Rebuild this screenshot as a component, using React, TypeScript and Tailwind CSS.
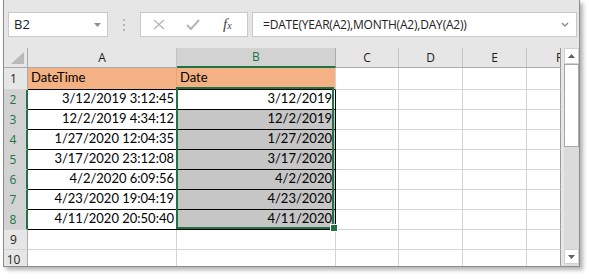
import React from 'react';

const cols = [
  { name: 'A', w: 'w-[149px]' },
  { name: 'B', w: 'w-[159px]' },
  { name: 'C', w: 'w-[63px]' },
  { name: 'D', w: 'w-[64px]' },
  { name: 'E', w: 'w-[64px]' },
];

const rows = [
  ['3/12/2019 3:12:45', '3/12/2019'],
  ['12/2/2019 4:34:12', '12/2/2019'],
  ['1/27/2020 12:04:35', '1/27/2020'],
  ['3/17/2020 23:12:08', '3/17/2020'],
  ['4/2/2020 6:09:56', '4/2/2020'],
  ['4/23/2020 19:04:19', '4/23/2020'],
  ['4/11/2020 20:50:40', '4/11/2020'],
];

const uiFont = "font-['Open_Sans','Noto_Sans',sans-serif]";
const cellFont = "font-['Lato','Open_Sans',sans-serif]";

function RowHeader({ n, selected }: { n: number; selected?: boolean }) {
  return (
    <div
      className={`w-[24px] shrink-0 flex items-center justify-center border-b border-[#d4d4d4] text-[12px] ${uiFont} ${
        selected
          ? 'bg-[#d2d2d2] text-[#217346] border-r-2 border-r-[#217346]'
          : 'bg-[#e6e6e6] text-[#222] border-r border-r-[#ababab]'
      }`}
    >
      <span className="pr-[4px]">{n}</span>
    </div>
  );
}

function EmptyCells() {
  return (
    <>
      <div className="w-[63px] shrink-0 border-r border-b border-[#d4d4d4]" />
      <div className="w-[64px] shrink-0 border-r border-b border-[#d4d4d4]" />
      <div className="w-[64px] shrink-0 border-r border-b border-[#d4d4d4]" />
      <div className="w-[34px] shrink-0 border-r border-r-[#9a9a9a] border-b border-b-[#d4d4d4]" />
    </>
  );
}

export default function App() {
  return (
    <div className="w-[589px] h-[279px] bg-white pl-[3px] overflow-hidden">
      <div className="w-[577px] h-[267px] bg-[#e6e6e6] border-l border-r border-b border-[#8c8c8c] shadow-[3px_3px_4px_rgba(0,0,0,0.3)] flex flex-col overflow-hidden">
        {/* formula bar */}
        <div className="h-[48px] shrink-0 flex items-start pt-[12px]">
          <div className="ml-[4px] w-[100px] h-[25px] bg-white border border-[#c8c8c8] flex items-center justify-between pl-[5px] pr-[6px]">
            <span className={`text-[13px] text-[#222] ${uiFont}`}>B2</span>
            <svg width="7" height="4" viewBox="0 0 7 4">
              <path d="M0 0h7L3.5 4z" fill="#8f8f8f" />
            </svg>
          </div>
          <div className="w-[32px] h-[25px] flex flex-col items-center justify-center gap-[3px]">
            <div className="w-[2px] h-[2px] bg-[#b4b4b4]" />
            <div className="w-[2px] h-[2px] bg-[#b4b4b4]" />
            <div className="w-[2px] h-[2px] bg-[#b4b4b4]" />
          </div>
          <div className="w-[108px] h-[25px] bg-white border border-[#c8c8c8] flex items-center pl-[12px]">
            <svg width="12" height="11" viewBox="0 0 12 11">
              <path d="M1 1l10 9M11 1L1 10" stroke="#b5b5b5" strokeWidth="1.3" fill="none" />
            </svg>
            <svg width="14" height="11" viewBox="0 0 14 11" className="ml-[21px]">
              <path d="M1 6l4 4L13 1" stroke="#b5b5b5" strokeWidth="2" fill="none" />
            </svg>
            <span className="ml-[23px] font-['Liberation_Serif',serif] italic text-[15px] leading-none text-[#444]">
              f<span className="text-[10px]">x</span>
            </span>
          </div>
          <div className="ml-[4px] w-[325px] h-[25px] bg-white border border-[#c8c8c8] flex items-center justify-between pl-[10px] pr-[7px]">
            <span className={`text-[12px] tracking-[-0.2px] text-[#222] ${uiFont}`}>
              =DATE(YEAR(A2),MONTH(A2),DAY(A2))
            </span>
            <svg width="8" height="5" viewBox="0 0 8 5">
              <path d="M1 1l3 3 3-3" stroke="#8a8a8a" strokeWidth="1.4" fill="none" />
            </svg>
          </div>
        </div>

        {/* grid + scrollbar */}
        <div className="flex-1 flex overflow-hidden">
          <div className="relative w-[557px] shrink-0 bg-white flex flex-col overflow-hidden">
            {/* column headers */}
            <div className="h-[20px] shrink-0 flex bg-[#e6e6e6] border-b border-[#ababab]">
              <div className="w-[24px] shrink-0 border-r border-[#ababab] flex items-end justify-end pr-[3px] pb-[3px]">
                <svg width="13" height="12" viewBox="0 0 13 12">
                  <path d="M13 0V12H0z" fill="#b9b9b9" />
                </svg>
              </div>
              {cols.map((c) => (
                <div
                  key={c.name}
                  className={`${c.w} shrink-0 flex items-center justify-center text-[12px] ${uiFont} ${
                    c.name === 'B'
                      ? 'bg-[#d2d2d2] text-[#217346] border-b-2 border-[#217346] -mb-px border-r border-r-[#ababab]'
                      : 'text-[#222] border-r border-[#c4c4c4]'
                  }`}
                >
                  {c.name}
                </div>
              ))}
              {/* F column is cut off by the sheet edge */}
              <div className="w-[34px] shrink-0 overflow-hidden border-r border-[#9a9a9a]">
                <div className={`w-[64px] h-full flex items-center justify-center text-[12px] text-[#222] ${uiFont}`}>F</div>
              </div>
            </div>

            {/* row 1 */}
            <div className="h-[22px] shrink-0 flex">
              <RowHeader n={1} />
              <div className={`w-[149px] shrink-0 bg-[#f4b183] border-r border-r-[#e2a57c] border-b border-b-black flex items-end pl-[3px] pb-[2px] text-[13px] text-black ${cellFont}`}>
                DateTime
              </div>
              <div className={`w-[159px] shrink-0 bg-[#f4b183] border-r border-r-[#d4d4d4] border-b border-b-black flex items-end pl-[3px] pb-[2px] text-[13px] text-black ${cellFont}`}>
                Date
              </div>
              <EmptyCells />
            </div>

            {rows.map(([dt, d], i) => (
              <div key={i} className="h-[20px] shrink-0 flex">
                <RowHeader n={i + 2} selected />
                <div className={`w-[149px] shrink-0 border-r border-b border-black flex items-end justify-end pr-[2px] pb-[1px] text-[13px] text-black ${cellFont}`}>
                  {dt}
                </div>
                <div
                  className={`w-[159px] shrink-0 border-r border-b border-black flex items-end justify-end pr-[3px] pb-[1px] text-[13px] text-black ${cellFont} ${
                    i === 0 ? 'bg-white' : 'bg-[#c6c6c6]'
                  }`}
                >
                  {d}
                </div>
                <EmptyCells />
              </div>
            ))}

            {[9, 10].map((n) => (
              <div key={n} className="h-[20px] shrink-0 flex">
                <RowHeader n={n} />
                <div className="w-[149px] shrink-0 border-r border-b border-[#d4d4d4]" />
                <div className="w-[159px] shrink-0 border-r border-b border-[#d4d4d4]" />
                <EmptyCells />
              </div>
            ))}

            {/* selection B2:B8 */}
            <div className="absolute left-[172px] top-[39px] w-[158px] h-[142px] border-2 border-[#217346] pointer-events-none" />
            <div className="absolute left-[327px] top-[177px] w-[6px] h-[6px] bg-[#217346] outline outline-1 outline-white" />
          </div>

          {/* vertical scrollbar */}
          <div className="ml-[3px] w-[15px] shrink-0 bg-[#dbdbdb] flex flex-col">
            <div className="h-[16px] shrink-0 bg-white border border-[#d0d0d0] flex items-center justify-center">
              <svg width="7" height="4" viewBox="0 0 7 4">
                <path d="M3.5 0L7 4H0z" fill="#606060" />
              </svg>
            </div>
            <div className="h-[83px] shrink-0 bg-white border border-[#a8a8a8]" />
            <div className="flex-1" />
            <div className="h-[15px] shrink-0 bg-white border border-[#d0d0d0] flex items-center justify-center">
              <svg width="7" height="4" viewBox="0 0 7 4">
                <path d="M0 0h7L3.5 4z" fill="#606060" />
              </svg>
            </div>
            <div className="h-[2px] shrink-0" />
          </div>
        </div>
      </div>
    </div>
  );
}
